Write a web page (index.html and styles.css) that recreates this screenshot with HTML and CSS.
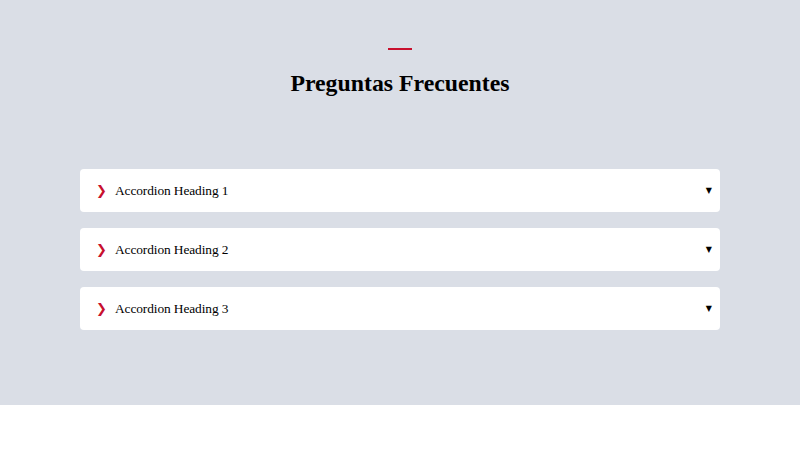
FILE: index.html
```html
<!DOCTYPE html>
<html lang="es">
<head>
<meta charset="utf-8">
<link rel="stylesheet" href="styles.css">
</head>
<body>
<section class="faq">
  <div class="faq-head">
    <span class="rule"></span>
    <h2 class="title">Preguntas Frecuentes</h2>
  </div>
  <div class="list">
    <div class="item"><span class="chev">❯</span><span class="label">Accordion Heading 1</span><span class="caret">▼</span></div>
    <div class="item"><span class="chev">❯</span><span class="label">Accordion Heading 2</span><span class="caret">▼</span></div>
    <div class="item"><span class="chev">❯</span><span class="label">Accordion Heading 3</span><span class="caret">▼</span></div>
  </div>
</section>
</body>
</html>
```
FILE: styles.css
```css
html, body { margin: 0; padding: 0; background: #ffffff; }
body { font-family: "Liberation Serif", "Times New Roman", serif; color: #000; }
.faq {
  background: #dadee6;
  height: 405px;
  box-sizing: border-box;
  padding-top: 48px;
}
.faq-head { display: flex; flex-direction: column; align-items: center; }
.rule { display: block; width: 24px; height: 2px; background: #c8102e; }
.title { margin: 18px 0 0; font-size: 23.8px; font-weight: bold; line-height: 30px; }
.list {
  margin: 71px 80px 0;
  display: flex; flex-direction: column; gap: 16px;
}
.item {
  background: #fff; border-radius: 4px; height: 43px;
  display: flex; align-items: center; padding: 0 8px 0 16px;
}
.chev { color: #c8102e; font-size: 13px; width: 19px; font-family: "DejaVu Sans", sans-serif; }
.label { flex: 1; font-size: 13.4px; letter-spacing: -0.1px; }
.caret { font-size: 8px; font-family: "DejaVu Sans", sans-serif; }
```
